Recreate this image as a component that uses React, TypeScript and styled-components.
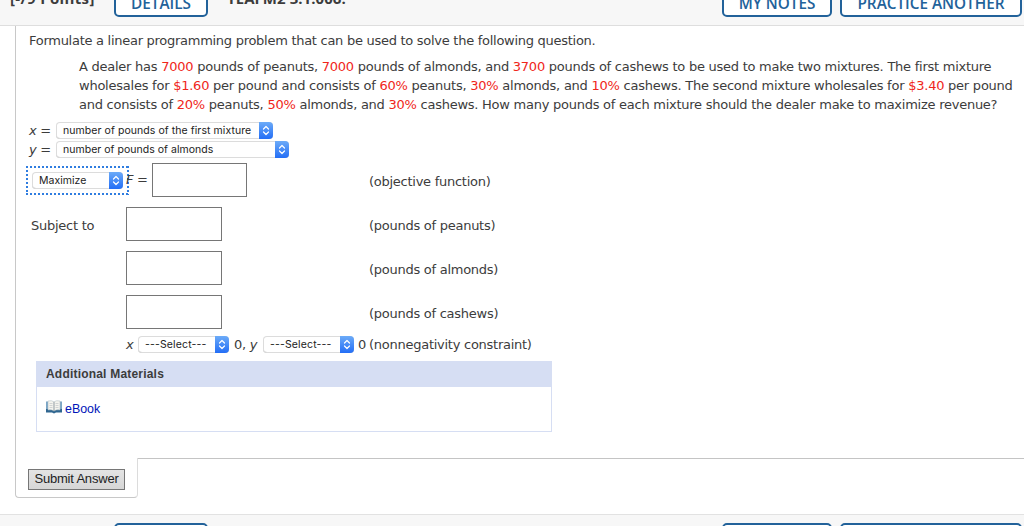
import React from 'react';
import styled, { createGlobalStyle } from 'styled-components';

const GlobalStyle = createGlobalStyle`
  html, body {
    margin: 0;
    height: 100%;
    overflow: hidden;
    background: #fff;
  }
`;

const Page = styled.div`
  display: flex;
  flex-direction: column;
  height: 526px;
  overflow: hidden;
  color: #3c3c3c;
  font: 13px/19px Verdana, 'DejaVu Sans', sans-serif;
  letter-spacing: -0.26px;
`;

const HeaderBar = styled.header`
  display: flex;
  align-items: flex-end;
  flex: none;
  box-sizing: border-box;
  height: 26px;
  padding: 0 2px 8px 10px;
  overflow: hidden;
  background: #f7f7f7;
  border-bottom: 1px solid #dedede;
`;

const HeaderText = styled.div<{ $width: number; $indent?: number; $spacing?: number }>`
  flex: none;
  box-sizing: border-box;
  width: ${({ $width }) => $width}px;
  padding: 0 0 9px ${({ $indent = 0 }) => $indent}px;
  font: 700 15px/20px 'Open Sans', sans-serif;
  letter-spacing: ${({ $spacing = 0 }) => $spacing}px;
  white-space: nowrap;
`;

const HeaderButton = styled.button<{ $width: number }>`
  flex: none;
  box-sizing: border-box;
  width: ${({ $width }) => $width}px;
  height: 38px;
  padding: 9px 0 0;
  color: #22629a;
  background: #fff;
  border: 2px solid #22629a;
  border-radius: 5px;
  font: 600 15.3px/20px 'Open Sans', sans-serif;
  white-space: nowrap;
`;

const HeaderActions = styled.div`
  display: flex;
  gap: 8px;
  margin-left: auto;
`;

const Body = styled.main`
  flex: none;
  box-sizing: border-box;
  height: 432px;
  margin-left: 15px;
  padding: 5px 0 0 13px;
  border-left: 1px solid #c8c8c8;
`;

const Question = styled.p<{ $spacing: number }>`
  margin: 0;
  letter-spacing: ${({ $spacing }) => $spacing}px;
  white-space: nowrap;
`;

const Problem = styled.div`
  padding: 7px 0 0 50px;
`;

const Num = styled.span`
  color: #f0261a;
`;

const FormRow = styled.div<{ $height: number; $top?: number }>`
  display: flex;
  align-items: center;
  height: ${({ $height }) => $height}px;
  margin-top: ${({ $top = 0 }) => $top}px;
  white-space: pre;
`;

const Lead = styled.div<{ $width: number; $indent?: number; $drop?: number; $lift?: number }>`
  flex: none;
  box-sizing: border-box;
  width: ${({ $width }) => $width}px;
  padding-top: ${({ $drop = 0 }) => $drop}px;
  padding-bottom: ${({ $lift = 0 }) => $lift}px;
  padding-left: ${({ $indent = 0 }) => $indent}px;
`;

const SelectBox = styled.div<{ $width: number }>`
  display: flex;
  flex: none;
  box-sizing: border-box;
  width: ${({ $width }) => $width}px;
  height: 17px;
  background: #fff;
  border-radius: 4px;
  box-shadow: inset 0 0 0 1px #dcdcdc, inset 0 -1px 0 #bdbdbd;
  color: #222;
  font: 10.5px/18px Inter, sans-serif;
`;

const SelectValue = styled.span<{ $spacing: number }>`
  flex: 1;
  padding-left: 7px;
  letter-spacing: ${({ $spacing }) => $spacing}px;
`;

const Knob = styled.span`
  display: flex;
  align-items: center;
  justify-content: center;
  width: 14px;
  background: linear-gradient(#6cabf8, #236ef6);
  border-radius: 0 4px 4px 0;
`;

// square-dotted ring, spills over the neighbouring text
const FocusRing = styled.div`
  flex: none;
  margin: 0 -6px;
  padding: 6px;
  background:
    repeating-linear-gradient(90deg, #2f7de0 0 2px, transparent 2px 4px) top / 100% 2px no-repeat,
    repeating-linear-gradient(90deg, #2f7de0 0 2px, transparent 2px 4px) bottom / 100% 2px no-repeat,
    repeating-linear-gradient(#2f7de0 0 2px, transparent 2px 4px) left / 2px 100% no-repeat,
    repeating-linear-gradient(#2f7de0 0 2px, transparent 2px 4px) right / 2px 100% no-repeat;
`;

const Answer = styled.input<{ $width?: number }>`
  flex: none;
  box-sizing: border-box;
  width: ${({ $width = 96 }) => $width}px;
  height: 34px;
  padding: 0;
  background: #fff;
  border: 1px solid #767676;
`;

const Note = styled.span<{ $drop?: number }>`
  padding-top: ${({ $drop = 2 }) => $drop}px;
`;

const Materials = styled.section`
  box-sizing: border-box;
  width: 516px;
  height: 71px;
  margin: 7px 0 0 7px;
  border: 1px solid #d6def3;
  font: 12px/16px 'Liberation Sans', Arial, sans-serif;
`;

const MaterialsTitle = styled.h3`
  height: 25px;
  margin: 0;
  padding-left: 9px;
  background: #d6def3;
  font: 700 12px/25px 'Liberation Sans', Arial, sans-serif;
  letter-spacing: 0.2px;
`;

const EbookLink = styled.a`
  display: flex;
  align-items: flex-start;
  gap: 3px;
  padding: 13px 0 0 9px;
  color: #0014b8;
  font-size: 12.4px;
  letter-spacing: 0;
  text-decoration: none;

  & span {
    padding-top: 1px;
  }
`;

const Footer = styled.div`
  display: flex;
  flex: none;
  height: 56px;
  padding-left: 15px;
`;

const SubmitTab = styled.div`
  box-sizing: border-box;
  width: 123px;
  height: 40px;
  padding: 11px 0 0 12px;
  border: 1px solid #c8c8c8;
  border-top: 0;
  border-right-color: #dcdcdc;
  border-radius: 0 0 4px 4px;
`;

const Rule = styled.div`
  flex: 1;
  height: 40px;
  border-top: 1px solid #c4c4c4;
`;

const SubmitButton = styled.button`
  display: block;
  width: 97px;
  height: 21px;
  padding: 0 0 2px;
  color: #222;
  background: linear-gradient(#e4e4e4, #d6d6d6);
  border: 1px solid #767676;
  font: 13px/17px 'Liberation Sans', Arial, sans-serif;
  letter-spacing: -0.2px;
  white-space: nowrap;
`;

const NextHeader = styled.div`
  display: flex;
  flex: none;
  box-sizing: border-box;
  height: 46px;
  padding: 8px 2px 0 114px;
  background: #f7f7f7;
  border-top: 1px solid #e2e2e2;
`;

type SelectProps = { width: number; value: string; spacing?: number };

const Select = ({ width, value, spacing = 0.15 }: SelectProps) => (
  <SelectBox $width={width}>
    <SelectValue $spacing={spacing}>{value}</SelectValue>
    <Knob>
      <svg width="8" height="11" viewBox="0 0 8 11" fill="none" stroke="#fff" strokeWidth="1.2" strokeLinecap="round" strokeLinejoin="round">
        <path d="M1.5 4L4 1.5L6.5 4M1.5 7L4 9.5L6.5 7" />
      </svg>
    </Knob>
  </SelectBox>
);

const BookIcon = () => (
  <svg width="16" height="14" viewBox="0 0 16 14">
    <path d="M0 2H16V12.5H10L8 13.5L6 12.5H0Z" fill="#2f6690" />
    <path d="M0 1.5H2V9H0ZM14 1.5H16V9H14Z" fill="#7ba6c6" />
    <path d="M2 1Q5.500 0 8 1.800Q10.500 0 14 1V10Q10.500 9.300 8 11Q5.500 9.300 2 10Z" fill="#f4f4ee" stroke="#a9b6bd" strokeWidth=".5" />
    <path d="M8 2V11" stroke="#8f9ba2" />
    <path d="M3.500 3.500H6.500M3.500 5.500H6.500M3.500 7.500H6.500M9.500 3.500H12.500M9.500 5.500H12.500M9.500 7.500H12.500" stroke="#c6cacb" strokeWidth=".8" />
  </svg>
);

const constraints = ['(pounds of peanuts)', '(pounds of almonds)', '(pounds of cashews)'];

const App = () => (
  <Page>
    <GlobalStyle />
    <HeaderBar>
      <HeaderText $width={104} $spacing={0.35}>[-/9 Points]</HeaderText>
      <HeaderButton $width={94}>DETAILS</HeaderButton>
      <HeaderText $width={150} $indent={19} $spacing={0.05}>TEAFM2 3.1.006.</HeaderText>
      <HeaderActions>
        <HeaderButton $width={110}>MY NOTES</HeaderButton>
        <HeaderButton $width={182}>PRACTICE ANOTHER</HeaderButton>
      </HeaderActions>
    </HeaderBar>
    <Body>
      <Question $spacing={-0.275}>Formulate a linear programming problem that can be used to solve the following question.</Question>
      <Problem>
        <Question $spacing={-0.25}>
          A dealer has <Num>7000</Num> pounds of peanuts, <Num>7000</Num> pounds of almonds, and <Num>3700</Num> pounds of cashews to be used to make two mixtures. The first mixture
        </Question>
        <Question $spacing={-0.238}>
          wholesales for <Num>$1.60</Num> per pound and consists of <Num>60%</Num> peanuts, <Num>30%</Num> almonds, and <Num>10%</Num> cashews. The second mixture wholesales for <Num>$3.40</Num> per pound
        </Question>
        <Question $spacing={-0.25}>
          and consists of <Num>20%</Num> peanuts, <Num>50%</Num> almonds, and <Num>30%</Num> cashews. How many pounds of each mixture should the dealer make to maximize revenue?
        </Question>
      </Problem>
      <FormRow $height={19} $top={7}>
        <Lead $width={27}><i>x</i> =</Lead>
        <Select width={217} value="number of pounds of the first mixture" spacing={0.07} />
      </FormRow>
      <FormRow $height={19}>
        <Lead $width={27}><i>y</i> =</Lead>
        <Select width={233} value="number of pounds of almonds" spacing={0.03} />
      </FormRow>
      <FormRow $height={34} $top={4}>
        <Lead $width={3} />
        <FocusRing>
          <Select width={91} value="Maximize" spacing={0.03} />
        </FocusRing>
        <Lead $width={29} $indent={3} $lift={2}><i>F</i> =</Lead>
        <Answer $width={95} />
        <Lead $width={122} />
        <Note>(objective function)</Note>
      </FormRow>
      {constraints.map((text, index) => (
        <FormRow key={text} $height={34} $top={10}>
          <Lead $width={97} $indent={2} $drop={2}>{index === 0 ? 'Subject to' : ''}</Lead>
          <Answer />
          <Lead $width={147} />
          <Note>{text}</Note>
        </FormRow>
      ))}
      <FormRow $height={19} $top={6}>
        <Lead $width={109} $indent={97}><i>x</i></Lead>
        <Select width={91} value="---Select---" />
        <Lead $width={34} $indent={5}>0, <i>y</i></Lead>
        <Select width={91} value="---Select---" />
        <Lead $width={15} $indent={4}>0</Lead>
        <Note $drop={0}>(nonnegativity constraint)</Note>
      </FormRow>
      <Materials>
        <MaterialsTitle>Additional Materials</MaterialsTitle>
        <EbookLink>
          <BookIcon />
          <span>eBook</span>
        </EbookLink>
      </Materials>
    </Body>
    <Footer>
      <SubmitTab>
        <SubmitButton>Submit Answer</SubmitButton>
      </SubmitTab>
      <Rule />
    </Footer>
    <NextHeader>
      <HeaderButton $width={94}>DETAILS</HeaderButton>
      <HeaderActions>
        <HeaderButton $width={110}>MY NOTES</HeaderButton>
        <HeaderButton $width={182}>PRACTICE ANOTHER</HeaderButton>
      </HeaderActions>
    </NextHeader>
  </Page>
);

export default App;
